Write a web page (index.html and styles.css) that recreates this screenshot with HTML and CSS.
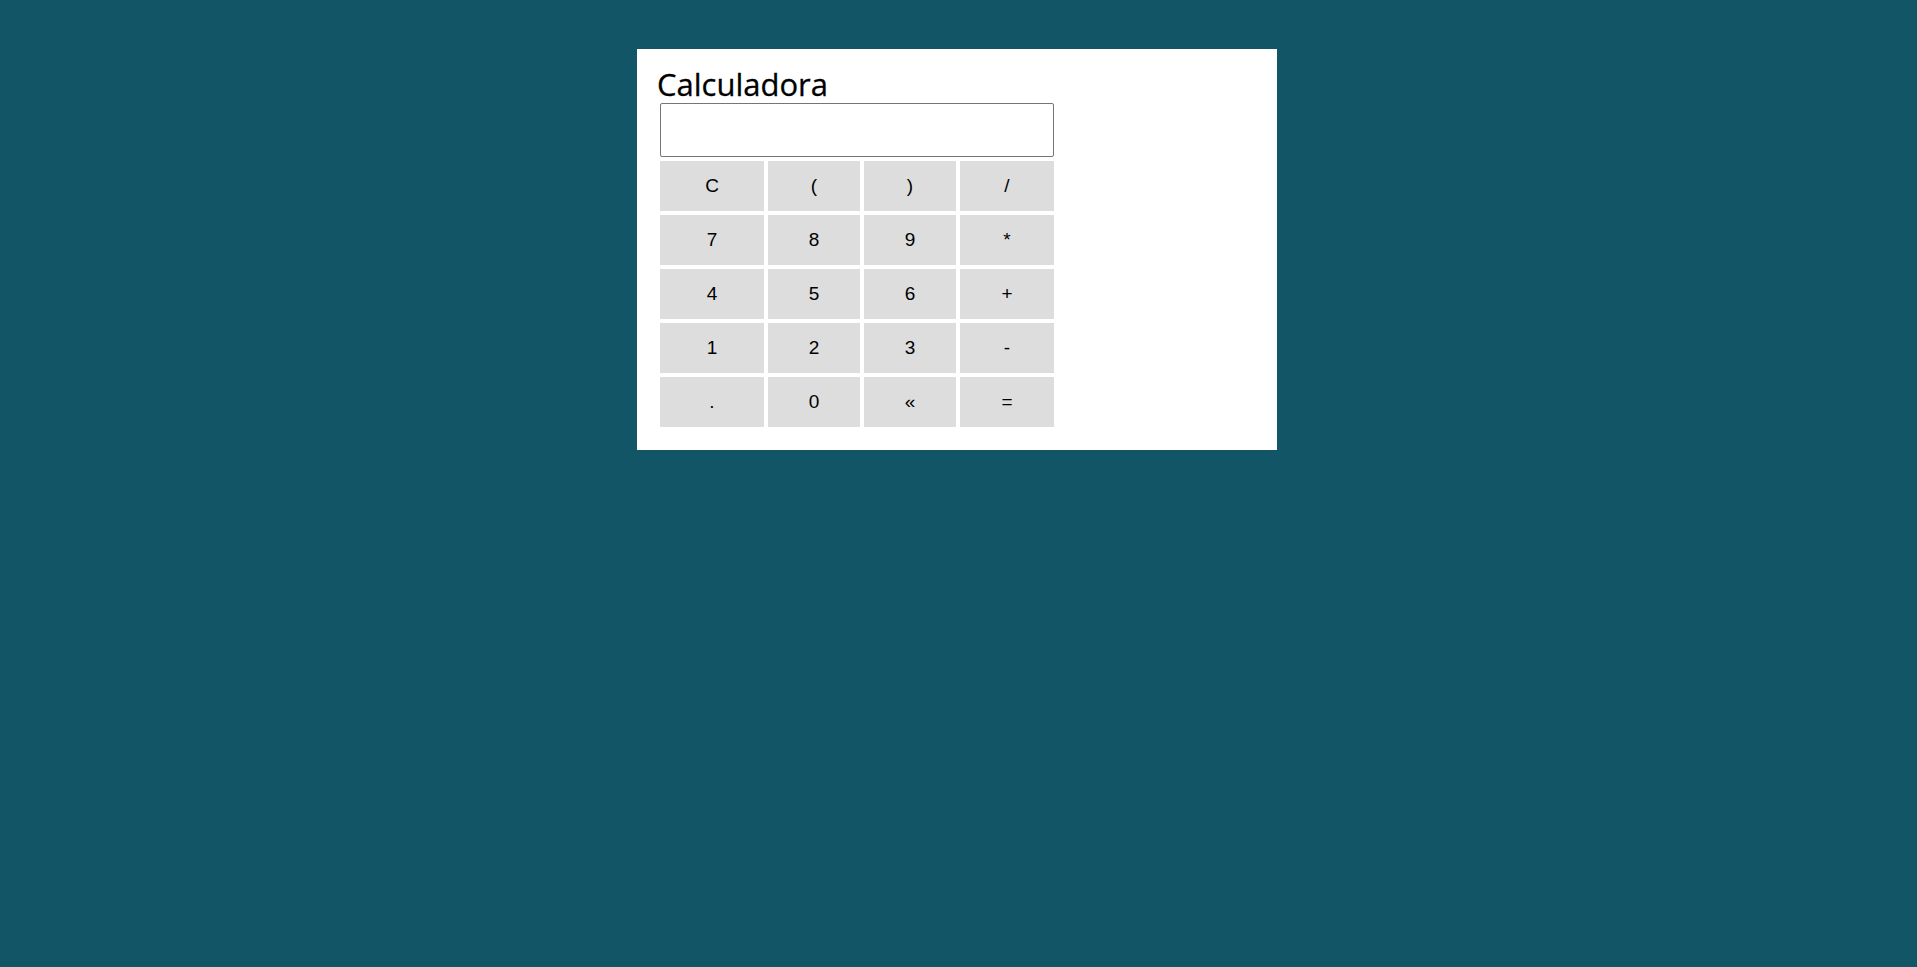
FILE: index.html
```html
<!DOCTYPE html>
<html lang="es">
<head>
  <meta charset="UTF-8" />
  <meta name="viewport" content="width=device-width, initial-scale=1.0" />
  <title>Calculadora</title>
  <link rel="stylesheet" href="styles.css">
</head>
<body>

  <div class="calculator">
    <h1>Calculadora</h1>

    <div class="keys">
      <input type="text" id="display" class="display" />

      <button>C</button>
      <button>(</button>
      <button>)</button>
      <button>/</button>

      <button>7</button>
      <button>8</button>
      <button>9</button>
      <button>*</button>

      <button>4</button>
      <button>5</button>
      <button>6</button>
      <button>+</button>

      <button>1</button>
      <button>2</button>
      <button>3</button>
      <button>-</button>

      <button>.</button>
      <button>0</button>
      <button>&laquo;</button>
      <button>=</button>
    </div>
  </div>

  <script>
    const display = document.getElementById("display");

    document.querySelectorAll(".keys button").forEach(btn => {
      btn.addEventListener("click", () => {
        const key = btn.textContent;

        if (key === "C") {
          display.value = "";
        } else if (key === "\u00ab") {
          display.value = display.value.slice(0, -1);
        } else if (key === "=") {
          try {
            display.value = Function("return " + display.value)();
          } catch (e) {
            display.value = "Error";
          }
        } else {
          display.value += key;
        }
      });
    });
  </script>
</body>
</html>
```

FILE: styles.css
```css
body {
  margin: 0;
  padding-right: 3px;
  background-color: #115566;
  font-family: "Open Sans", Arial, sans-serif;
}

.calculator {
  width: 600px;
  margin: 49px auto 0;
  padding: 19px 20px 20px;
  background-color: #fff;
}

h1 {
  margin: 0;
  font-size: 31px;
  font-weight: normal;
  line-height: 32px;
  color: #000;
  -webkit-text-stroke: 0.3px #000;
}

.keys {
  display: grid;
  grid-template-columns: 104px 92px 92px 94px;
  grid-template-rows: 54px;
  grid-auto-rows: 50px;
  gap: 4px;
  width: 394px;
  padding: 3px;
}

.display {
  grid-column: 1 / 5;
  height: 54px;
  box-sizing: border-box;
  margin: 0;
  border: 1px solid #767676;
  border-radius: 2px;
  font-size: 20px;
  font-family: "Liberation Sans", Arial, sans-serif;
}

.keys button {
  border: none;
  background-color: #dddddd;
  color: #000;
  font-family: "Liberation Sans", Arial, sans-serif;
  font-size: 19px;
  cursor: pointer;
}

.keys button:hover {
  background-color: #cccccc;
}
```
